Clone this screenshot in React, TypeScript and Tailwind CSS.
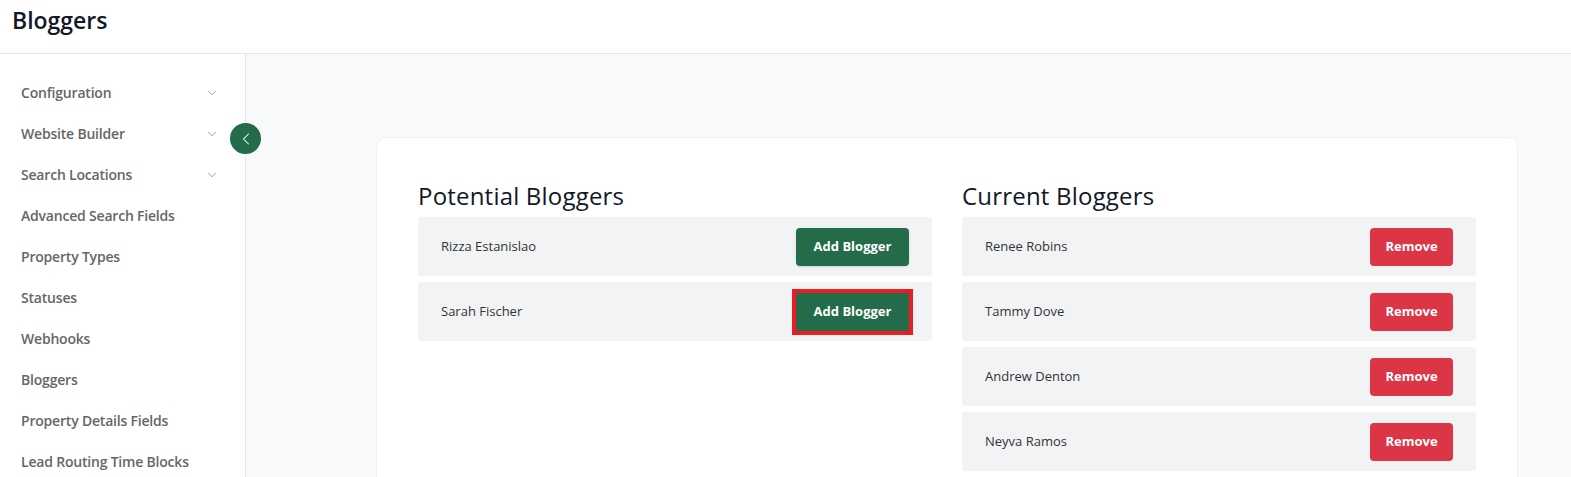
import { ChevronDown, ChevronLeft } from "lucide-react";

const MENU: { label: string; sub?: boolean }[] = [
  { label: "Configuration", sub: true },
  { label: "Website Builder", sub: true },
  { label: "Search Locations", sub: true },
  { label: "Advanced Search Fields" },
  { label: "Property Types" },
  { label: "Statuses" },
  { label: "Webhooks" },
  { label: "Bloggers" },
  { label: "Property Details Fields" },
  { label: "Lead Routing Time Blocks" },
];

const potential = ["Rizza Estanislao", "Sarah Fischer"];
const current = ["Renee Robins", "Tammy Dove", "Andrew Denton", "Neyva Ramos"];

export default function App() {
  return (
    <div className="h-[477px] overflow-hidden bg-white font-['Open_Sans','Noto_Sans',sans-serif]">
      {/* Top bar */}
      <header className="h-[54px] border-b border-[#e3e5e8] px-3 flex items-center">
        <h1 className="text-[23px] font-semibold text-[#111827] leading-none -mt-[12px]">Bloggers</h1>
      </header>

      <div className="flex h-[423px]">
        {/* Sidebar */}
        <aside className="relative w-[246px] shrink-0 border-r border-[#e3e5e8] pt-[18px]">
          <nav className="flex flex-col">
            {MENU.map((item) => (
              <div
                key={item.label}
                className="h-[41px] flex items-center justify-between pl-[21px] pr-[26px] text-[14px] font-semibold tracking-[-0.2px] text-[#666666]"
              >
                <span>{item.label}</span>
                {item.sub && <ChevronDown size={14} strokeWidth={1.25} className="text-[#777]" />}
              </div>
            ))}
          </nav>
          <button className="absolute top-[69px] -right-[16px] h-[31px] w-[31px] rounded-full bg-[#236b49] flex items-center justify-center text-white">
            <ChevronLeft size={20} strokeWidth={1.25} />
          </button>
        </aside>

        {/* Main */}
        <main className="flex-1 bg-[#f8f9fa] pt-[83px] pl-[130px] pr-[53px]">
          <section className="bg-white rounded-[10px] border border-[#f0f1f3] px-[41px] pt-[42px] pb-[40px]">
            <div className="grid grid-cols-2 gap-[30px]">
              <div>
                <h2 className="text-[24px] leading-[32px] mb-[5px] text-[#111827] tracking-[0.2px]">Potential Bloggers</h2>
                <div className="flex flex-col gap-[6px]">
                  {potential.map((name, i) => (
                    <div key={name} className="h-[59px] rounded-[3px] bg-[#f2f3f5] flex items-center justify-between pl-[23px] pr-[23px]">
                      <span className="text-[13px] text-[#333]">{name}</span>
                      <button
                        className={
                          i === 1
                            ? "h-[38px] w-[113px] bg-[#236b49] text-white text-[13px] font-bold outline-4 outline-[#ea1c24]"
                            : "h-[38px] w-[113px] rounded-[4px] bg-[#236b49] text-white text-[13px] font-bold shadow-sm"
                        }
                      >
                        Add Blogger
                      </button>
                    </div>
                  ))}
                </div>
              </div>
              <div>
                <h2 className="text-[24px] leading-[32px] mb-[5px] text-[#111827] tracking-[0.2px]">Current Bloggers</h2>
                <div className="flex flex-col gap-[6px]">
                  {current.map((name) => (
                    <div key={name} className="h-[59px] rounded-[3px] bg-[#f2f3f5] flex items-center justify-between pl-[23px] pr-[23px]">
                      <span className="text-[13px] text-[#333]">{name}</span>
                      <button className="h-[38px] w-[83px] rounded-[4px] bg-[#dc3545] text-white text-[13px] font-bold">
                        Remove
                      </button>
                    </div>
                  ))}
                  <div className="h-[59px] rounded-[3px] bg-[#f2f3f5]" />
                </div>
              </div>
            </div>
          </section>
        </main>
      </div>
    </div>
  );
}
